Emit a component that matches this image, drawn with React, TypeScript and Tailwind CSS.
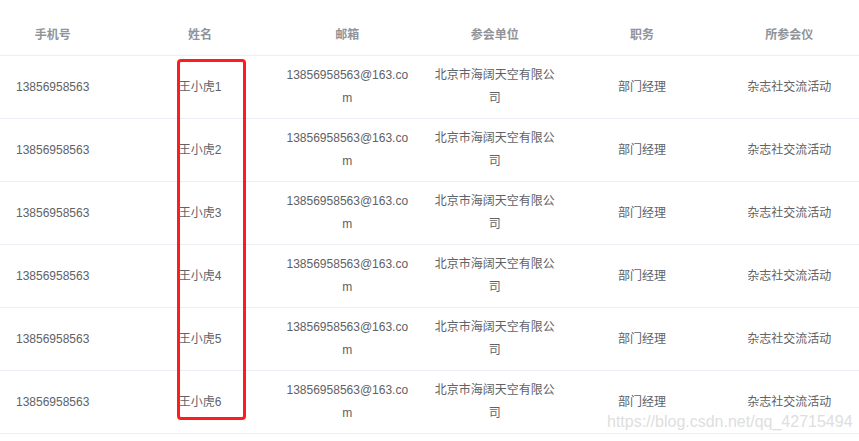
const headers = ['手机号', '姓名', '邮箱', '参会单位', '职务', '所参会仪'];

const rows = [1, 2, 3, 4, 5, 6].map((n) => ({
  phone: '13856958563',
  name: `王小虎${n}`,
  email: '13856958563@163.com',
  company: '北京市海阔天空有限公司',
  post: '部门经理',
  meeting: '杂志社交流活动',
}));

export default function App() {
  return (
    <div
      className="relative w-[859px] h-[441px] overflow-hidden bg-white"
      style={{ fontFamily: '"Liberation Sans", "Noto Sans CJK SC", sans-serif' }}
    >
      <table className="-ml-[21px] w-[884px] table-fixed border-collapse text-[12px]">
        <thead>
          <tr className="border-b border-[#ebeef5]">
            {headers.map((h) => (
              <th
                key={h}
                className="px-[10px] pt-[24px] pb-[8px] text-center font-bold leading-[23px] text-[#909399]"
              >
                {h}
              </th>
            ))}
          </tr>
        </thead>
        <tbody>
          {rows.map((r) => (
            <tr key={r.name} className="h-[63px] border-b border-[#ebeef5] text-[#606266]">
              {[r.phone, r.name, r.email, r.company, r.post, r.meeting].map((v, i) => (
                <td key={i} className="px-[10px] py-[8px] text-center align-middle leading-[23px] break-all">
                  {v}
                </td>
              ))}
            </tr>
          ))}
        </tbody>
      </table>

      <div className="absolute left-[177px] top-[59px] h-[361px] w-[69px] rounded-[4px] border-[3px] border-[#ff1c1c]" />

      <div className="absolute left-[607px] top-[412px] text-[16px] leading-[20px] text-[#dedede]">
        https://blog.csdn.net/qq_42715494
      </div>
    </div>
  );
}
